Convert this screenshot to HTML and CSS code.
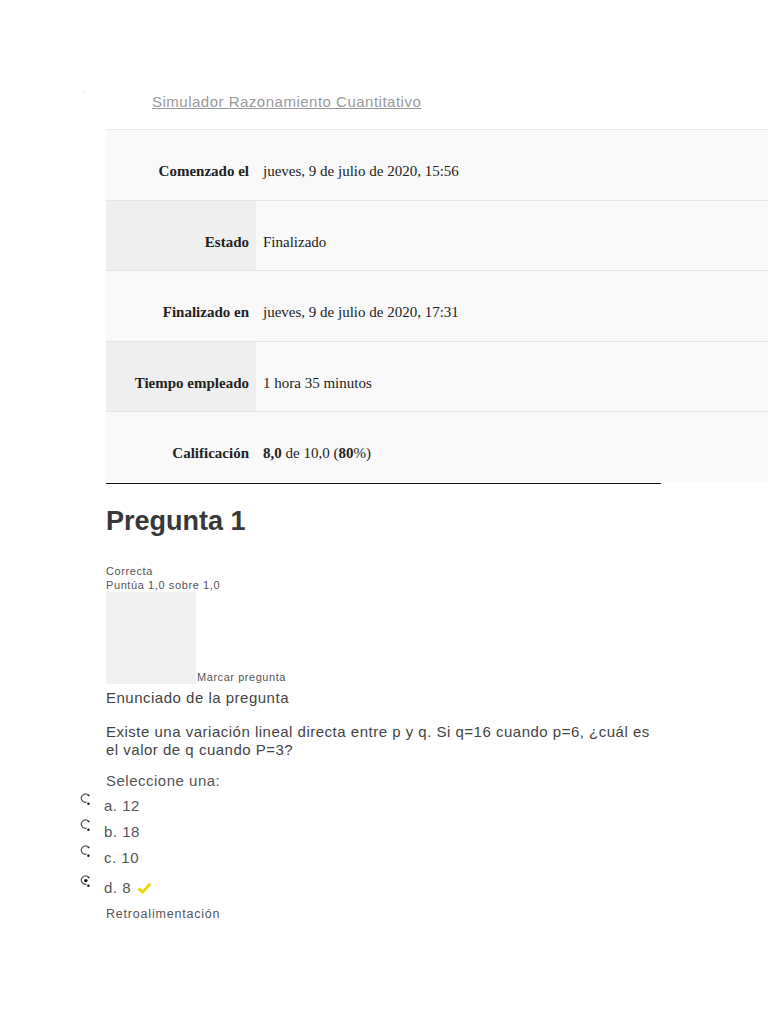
FILE: index.html
```html
<!DOCTYPE html>
<html lang="es">
<head>
<meta charset="utf-8">
<link rel="stylesheet" href="styles.css">
</head>
<body>
<div class="page">
  <div class="dot-mark"></div>
  <div class="crumb"><a href="#" class="crumb-link">Simulador Razonamiento Cuantitativo</a></div>
  <table class="summary">
    <tr class="row odd"><th>Comenzado el</th><td>jueves, 9 de julio de 2020, 15:56</td></tr>
    <tr class="row even"><th>Estado</th><td>Finalizado</td></tr>
    <tr class="row odd"><th>Finalizado en</th><td>jueves, 9 de julio de 2020, 17:31</td></tr>
    <tr class="row even"><th>Tiempo empleado</th><td>1 hora 35 minutos</td></tr>
    <tr class="row odd"><th>Calificación</th><td><b>8,0</b> de 10,0 (<b>80</b>%)</td></tr>
  </table>
  <div class="rule"></div>
  <h2 class="qtitle">Pregunta 1</h2>
  <div class="qinfo">
    <div>Correcta</div>
    <div>Puntúa 1,0 sobre 1,0</div>
  </div>
  <div class="flag"><span class="flag-box"></span><span class="flag-text">Marcar pregunta</span></div>
  <div class="enun">Enunciado de la pregunta</div>
  <p class="qtext">Existe una variación lineal directa entre p y q. Si q=16 cuando p=6, ¿cuál es el valor de q cuando P=3?</p>
  <div class="prompt">Seleccione una:</div>
  <div class="answers">
    <div class="opt">
      <svg class="radio" width="12" height="14" viewBox="0 0 12 14"><path d="M8.6 3.6 A4.1 4.1 0 1 0 6.6 10.1" fill="none" stroke="#555" stroke-width="1.2"/><circle cx="8.6" cy="3.4" r="0.9" fill="#222"/><circle cx="8.4" cy="11.7" r="1.2" fill="#111"/></svg>
      <span class="lbl">a. 12</span>
    </div>
    <div class="opt">
      <svg class="radio" width="12" height="14" viewBox="0 0 12 14"><path d="M8.6 3.6 A4.1 4.1 0 1 0 6.6 10.1" fill="none" stroke="#555" stroke-width="1.2"/><circle cx="8.6" cy="3.4" r="0.9" fill="#222"/><circle cx="8.4" cy="11.7" r="1.2" fill="#111"/></svg>
      <span class="lbl">b. 18</span>
    </div>
    <div class="opt">
      <svg class="radio" width="12" height="14" viewBox="0 0 12 14"><path d="M8.6 3.6 A4.1 4.1 0 1 0 6.6 10.1" fill="none" stroke="#555" stroke-width="1.2"/><circle cx="8.6" cy="3.4" r="0.9" fill="#222"/><circle cx="8.4" cy="11.7" r="1.2" fill="#111"/></svg>
      <span class="lbl">c. 10</span>
    </div>
    <div class="opt opt-last">
      <svg class="radio" width="12" height="14" viewBox="0 0 12 14"><path d="M8.6 3.6 A4.1 4.1 0 1 0 6.6 10.1" fill="none" stroke="#555" stroke-width="1.2"/><circle cx="8.6" cy="3.4" r="0.9" fill="#222"/><circle cx="5.9" cy="6.6" r="1.7" fill="#111"/><circle cx="8.4" cy="11.7" r="1.2" fill="#111"/></svg>
      <span class="lbl">d. 8 <svg class="check" width="15" height="12" viewBox="0 0 15 12"><path d="M1.5 6.5 L5.5 10 L13.5 1.8" fill="none" stroke="#e8d90a" stroke-width="3" stroke-linejoin="round"/></svg></span>
    </div>
  </div>
  <div class="feedback">Retroalimentación</div>
</div>
</body>
</html>
```

FILE: styles.css
```css
html, body {
  margin: 0;
  padding: 0;
  background: #fff;
}
body {
  font-family: "Liberation Sans", Arial, sans-serif;
  color: #444;
  width: 768px;
  overflow: hidden;
}
.page {
  position: relative;
  padding: 92px 0 80px 106px;
}
.dot-mark {
  position: absolute;
  left: 84px;
  top: 92px;
  width: 2px;
  height: 1px;
  background: #e4e4e4;
}
.crumb {
  padding-left: 46px;
  font-size: 15px;
  line-height: 20px;
  height: 37px;
}
.crumb-link {
  color: #999;
  text-decoration: underline;
  letter-spacing: 0.5px;
}
.summary {
  border-collapse: collapse;
  width: 662px;
  font-family: "Liberation Serif", "Times New Roman", serif;
  font-size: 15px;
  color: #222;
  border-top: 1px solid #e6e6e6;
}
.summary th,
.summary td {
  height: 70.6px;
  box-sizing: border-box;
  vertical-align: top;
  padding-top: 33px;
  line-height: 17px;
  border-bottom: 1px solid #e4e4e4;
}
.summary tr:last-child th,
.summary tr:last-child td {
  border-bottom: none;
}
.summary th {
  width: 150px;
  text-align: right;
  padding-right: 7px;
  font-weight: bold;
  box-sizing: border-box;
}
.summary td {
  padding-left: 7px;
  background: #f9f9f9;
}
.row.odd th { background: #f9f9f9; }
.row.even th { background: #efefef; }
.summary td b { font-weight: bold; }
.rule {
  width: 555px;
  height: 1px;
  margin-top: 1px;
  background: #111;
}
.qtitle {
  margin: 22px 0 0 0;
  font-size: 27px;
  line-height: 30px;
  font-weight: bold;
  color: #383838;
}
.qinfo {
  margin-top: 28px;
  font-size: 11px;
  line-height: 14px;
  color: #555;
  letter-spacing: 0.6px;
}
.flag {
  display: flex;
  align-items: flex-end;
  height: 92px;
}
.flag-box {
  display: block;
  width: 90px;
  height: 92px;
  background: #f0f0f0;
}
.flag-text {
  font-size: 11px;
  line-height: 11px;
  color: #555;
  letter-spacing: 0.55px;
  margin-left: 1px;
  margin-bottom: 1px;
}
.enun {
  font-size: 15px;
  line-height: 18px;
  color: #444;
  margin-top: 5px;
  letter-spacing: 0.5px;
}
.qtext {
  margin: 16px 0 0 0;
  width: 552px;
  font-size: 15px;
  line-height: 18px;
  color: #444;
  letter-spacing: 0.5px;
}
.prompt {
  margin-top: 13px;
  font-size: 15px;
  line-height: 18px;
  color: #555;
  letter-spacing: 0.5px;
}
.answers {
  margin-left: -28px;
  margin-top: 0;
}
.opt {
  display: flex;
  align-items: flex-start;
  height: 26px;
}
.opt-last {
  height: 30px;
  margin-top: 4px;
}
.radio {
  display: block;
  margin-left: 2px;
  margin-top: 2px;
  flex: none;
}
.lbl {
  margin-left: 12px;
  margin-top: 7px;
  font-size: 15px;
  line-height: 18px;
  color: #555;
  letter-spacing: 0.5px;
  display: flex;
  align-items: center;
  gap: 6px;
}
.check {
  display: block;
}
.feedback {
  margin-top: 4px;
  font-size: 12.5px;
  line-height: 16px;
  color: #555;
  letter-spacing: 0.8px;
}
```
